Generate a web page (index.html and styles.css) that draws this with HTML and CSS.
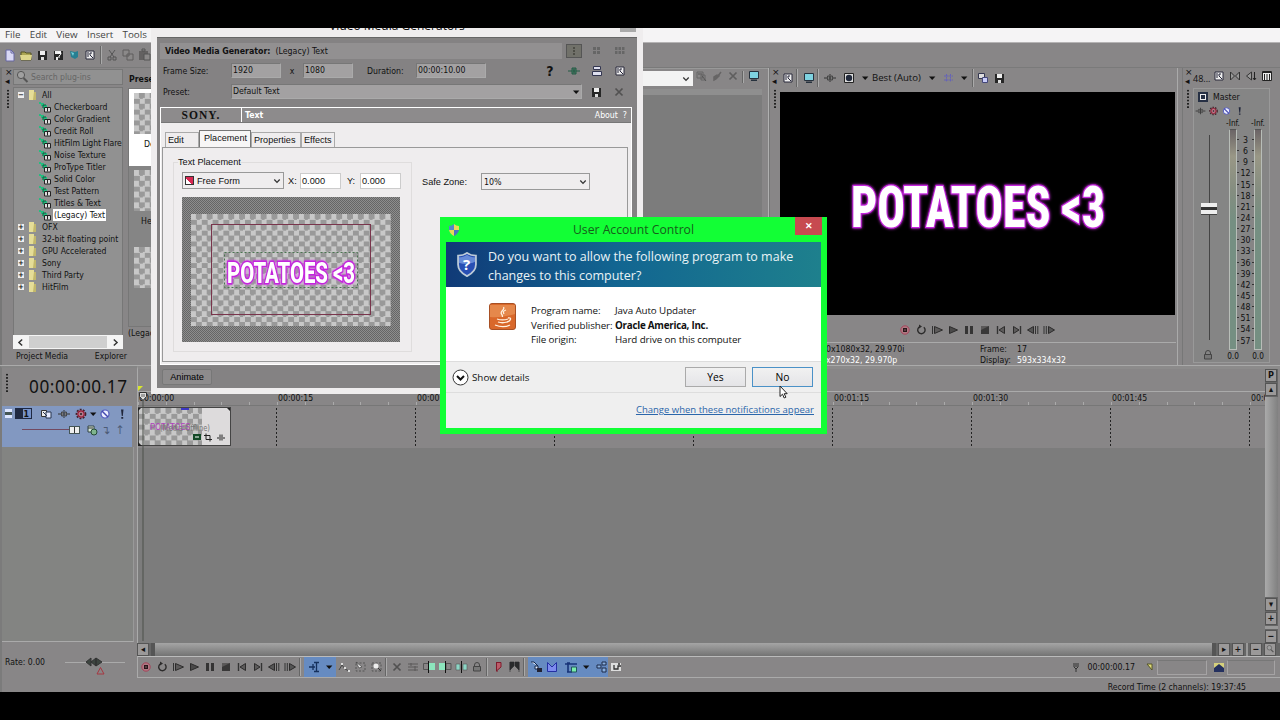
FILE: index.html
```html
<!DOCTYPE html>
<html lang="en">
<head>
    <meta charset="UTF-8">
    <title>Video Editor</title>
    <link rel="stylesheet" href="styles.css">
</head>
<body>
    <svg class="sprite">
        <symbol id="new" viewBox="0 0 16 16"><path d="M4 3h5l3 3v8H4z" fill="#d9d8f5" stroke="#6767a0"/><path d="M9 3v3h3" fill="none" stroke="#6767a0"/></symbol>
        <symbol id="open" viewBox="0 0 16 16"><path d="M3 5h4l1 1h5v7H3z" fill="#aba553" stroke="#555225"/><path d="M2 8h12l-1 5H3z" fill="#ddd68c"/></symbol>
        <symbol id="save" viewBox="0 0 16 16"><path d="M4 4h9v9H4z" fill="#262626"/><path d="M6 4h5v4H6z" fill="#eee"/><path d="M7 10h3v3H7z" fill="#ddd"/></symbol>
        <symbol id="saveas" viewBox="0 0 16 16"><path d="M4 4h9v9H4z" fill="#262626"/><path d="M5 4h6v3H5zM6 10h2v3H6z" fill="#eee"/><path d="M8 6q3-2 3 0t-2 3v2" fill="none" stroke="#fff"/></symbol>
        <symbol id="render" viewBox="0 0 16 16"><path d="M4 4l5 1v7l-4-2zM9 5l3-1v6l-3 2z" fill="#277f92"/><path d="M5 5l3 1-1 3z" fill="#79d2da"/></symbol>
        <symbol id="props" viewBox="0 0 16 16"><path d="M4 4h8v8H4z" fill="#eee" stroke="#29293a"/><path d="M6 5v5M7 7h2M8 8l3 3M9 5v2" stroke="#242438" fill="none"/></symbol>
        <symbol id="cut" viewBox="0 0 16 16"><path d="M5 3l5 7M11 3l-5 7M4 10h3v3H4zM9 10h3v3H9z" fill="none" stroke="#555"/></symbol>
        <symbol id="copy" viewBox="0 0 16 16"><path d="M3 3h6v6H3zM7 7h6v6H7z" fill="#8b8989" stroke="#5e5d5d"/></symbol>
        <symbol id="paste" viewBox="0 0 16 16"><path d="M3 4h9v9H3z" fill="#636161"/><path d="M6 2h3v2H6zM8 7h6v6H8z" fill="#8b8989" stroke="#555"/></symbol>
        <symbol id="glass" viewBox="0 0 16 16"><circle cx="7" cy="6" r="3.6" fill="#a0a0a0" stroke="#555"/><path d="M9.5 9l4 4" stroke="#555" stroke-width="2"/></symbol>
        <symbol id="fx" viewBox="0 0 15 13"><path d="M1 1h2v2H1zM3 2h3v3H3zM5 4h4v4H5z" fill="#25bd80"/><path d="M5 7V4h3" stroke="#085b3c" fill="none"/><path d="M6.500 6.500h6v4.500h-6zM9.500 6.500v4" fill="#ddd" stroke="#222"/></symbol>
        <symbol id="folder" viewBox="0 0 12 12"><path d="M2 1h5v10H2z" fill="#e5dd97"/><path d="M7 3h2v8H6z" fill="#c1b76b"/></symbol>
        <symbol id="rec" viewBox="0 0 16 16"><circle cx="8" cy="8" r="4.2" fill="#b07a84" stroke="#a4445a"/><rect x="6" y="6" width="4" height="4" fill="#28171a"/><rect x="7.500" y="7.500" width="1" height="1" fill="#eab"/></symbol>
        <symbol id="loop" viewBox="0 0 16 16"><path d="M10.8 5.200A3.700 3.700 0 1 1 7 4.600" fill="none" stroke="#2c2b2b" stroke-width="1.400"/><path d="M6 2.500l3 2-3 2z" fill="#2c2b2b"/></symbol>
        <symbol id="playstart" viewBox="0 0 16 16"><path d="M3.500 4v8" stroke="#333"/><path d="M5.500 4.500l8 3.500-8 3.500z" fill="#5d5b5b" stroke="#2c2b2b"/></symbol>
        <symbol id="play" viewBox="0 0 16 16"><path d="M4.500 4.500l8 3.500-8 3.500z" fill="#4a4949" stroke="#2c2b2b"/></symbol>
        <symbol id="pause" viewBox="0 0 16 16"><path d="M4 4h3v8H4zM9 4h3v8H9z" fill="#353434"/></symbol>
        <symbol id="stop" viewBox="0 0 16 16"><path d="M4 4h8v8H4z" fill="#393838"/><path d="M4 4h8l-8 4z" fill="#5b5959"/></symbol>
        <symbol id="first" viewBox="0 0 16 16"><path d="M4.500 4v8" stroke="#333" stroke-width="1.400"/><path d="M11.500 4.500v7L6 8z" fill="#5d5b5b" stroke="#2c2b2b"/></symbol>
        <symbol id="last" viewBox="0 0 16 16"><path d="M11.500 4v8" stroke="#333" stroke-width="1.400"/><path d="M4.500 4.500v7L10 8z" fill="#5d5b5b" stroke="#2c2b2b"/></symbol>
        <symbol id="prev" viewBox="0 0 16 16"><path d="M8.500 4.500v7L2.500 8z" fill="#555" stroke="#2c2b2b"/><path d="M10.500 4v8M12.800 4v8" stroke="#333"/></symbol>
        <symbol id="next" viewBox="0 0 16 16"><path d="M7.500 4.500v7l6-3.500z" fill="#555" stroke="#2c2b2b"/><path d="M3 4v8M5.300 4v8" stroke="#333"/></symbol>
        <symbol id="caret" viewBox="0 0 8 8"><path d="M1 2.500h6.400l-3.200 3.500z" fill="#111"/></symbol>
        <symbol id="chev" viewBox="0 0 8 8"><path d="M1.300 2.500L4 5.400l2.700-2.900" fill="none" stroke="#333" stroke-width="1.300"/></symbol>
        <symbol id="x" viewBox="0 0 16 16"><path d="M4.500 4.500l7 7M11.500 4.500l-7 7" stroke="#525151" stroke-width="1.700"/></symbol>
        <symbol id="brush" viewBox="0 0 16 16"><path d="M12 4L9 8M5 12l2-1 3-3-2-1-3 2z" fill="#5b5a5a" stroke="#5b5a5a" stroke-width="1.500"/></symbol>
        <symbol id="search2" viewBox="0 0 16 16"><path d="M4 4h6v6H4zM8 7h4v5H8z" fill="none" stroke="#5b5a5a"/><path d="M9 8l4 5M5 6h4" stroke="#444"/></symbol>
        <symbol id="screen" viewBox="0 0 16 16"><path d="M3.500 3.500h9v7h-9z" fill="#7ed2e0" stroke="#26313d"/><path d="M5 13h6v-1.500H5z" fill="#26313d"/></symbol>
        <symbol id="plug" viewBox="0 0 16 16"><path d="M2 8h3M11 8h3M8 4v8" stroke="#333"/><path d="M5.500 6h1.500v4H5.500zM9 6h1.500v4H9z" fill="#aaa" stroke="#333" stroke-width=".8"/></symbol>
        <symbol id="plugg" viewBox="0 0 16 16"><path d="M2 8h12M8 4v8" stroke="#225b44"/><path d="M6 5h1v6H6zM9 5h1v6H9z" fill="#62a386" stroke="#225b44"/></symbol>
        <symbol id="rack" viewBox="0 0 16 16"><path d="M4.500 3.500h7v3h-7zM3.500 8.500h9v4h-9z" fill="#dfe0ef" stroke="#333650"/></symbol>
        <symbol id="dot" viewBox="0 0 16 16"><path d="M3.500 3.500h9v9h-9z" fill="#ddd" stroke="#222"/><circle cx="8" cy="8" r="3.200" fill="#222a3c"/></symbol>
        <symbol id="grid" viewBox="0 0 16 16"><path d="M4 6h9M4 10h9M6.500 4v8M10.500 4v8" stroke="#6563b8" stroke-dasharray="2 .6"/></symbol>
        <symbol id="clip" viewBox="0 0 16 16"><path d="M3.500 3.500h6v5h-6z" fill="#ddd" stroke="#333650"/><path d="M7.500 7.500h5v5h-5z" fill="#c9cdfa" stroke="#45487a"/></symbol>
        <symbol id="gear" viewBox="0 0 16 16"><circle cx="8" cy="8" r="4.600" fill="none" stroke="#431f28" stroke-width="1.500" stroke-dasharray="2 1.300"/><circle cx="8" cy="8" r="3.200" fill="#b6798a" stroke="#98172f" stroke-width="1.200"/><circle cx="8" cy="8" r="1" fill="#222"/></symbol>
        <symbol id="mute" viewBox="0 0 16 16"><circle cx="8" cy="8" r="4" fill="#eceeff" stroke="#5359bd" stroke-width="1.200"/><path d="M5 5l6 6" stroke="#4449af" stroke-width="1.500"/></symbol>
        <symbol id="bang" viewBox="0 0 16 16"><path d="M7 3.500h2.500L8.800 10h-1zM7.300 11h1.900v1.700H7.300z" fill="#20263b"/></symbol>
        <symbol id="monitor" viewBox="0 0 16 16"><path d="M3.500 4.500h5v6h-5z" fill="#eee" stroke="#333"/><path d="M8 6h5v6H8zM5 6l4 4" fill="#e6ebff" stroke="#26344f"/></symbol>
        <symbol id="bowtie" viewBox="0 0 16 16"><path d="M3.500 4v8l4-4zM12.500 4v8l-4-4z" fill="#999" stroke="#333"/></symbol>
        <symbol id="dim" viewBox="0 0 16 16"><path d="M8.500 4v8L3.500 8z" fill="#999" stroke="#333"/><path d="M11.500 4v8M10 10l1.500 2 1.500-2" stroke="#222" fill="none"/></symbol>
        <symbol id="meters" viewBox="0 0 16 16"><path d="M3.500 3.500h9v9h-9z" fill="#eee" stroke="#222"/><path d="M3 4.500h10M5.500 6v6M8 6v6M10.500 6v6" stroke="#222"/></symbol>
        <symbol id="lock" viewBox="0 0 16 16"><path d="M5.500 8V6a2.500 2.500 0 0 1 5 0v2" fill="none" stroke="#444"/><path d="M4.500 7.500h7V12h-7z" fill="#777" stroke="#444"/></symbol>
        <symbol id="edit" viewBox="0 0 16 16"><path d="M9.500 3v10M7 3.500h5M7 12.500h5M2 8h6M6 5v6" stroke="#15305c" fill="none" stroke-width="1.300"/></symbol>
        <symbol id="env" viewBox="0 0 16 16"><path d="M3 11l3-5 3 4 4 2" stroke="#444" fill="none"/><path d="M5 4h2v2H5zM8 8h2v2H8zM12 11h2v2h-2z" fill="#ddd"/></symbol>
        <symbol id="sel" viewBox="0 0 16 16"><path d="M4 4h9v8H4z" fill="none" stroke="#555" stroke-dasharray="2 1.500"/><path d="M4 3l6 5-3 1z" fill="#eee" stroke="#444" stroke-width=".7"/></symbol>
        <symbol id="zoom" viewBox="0 0 16 16"><path d="M4 4h9v8H4z" fill="none" stroke="#555" stroke-dasharray="2 1.500"/><circle cx="8" cy="7" r="2.500" fill="#eee"/><path d="M10 9l3 3" stroke="#333"/></symbol>
        <symbol id="trim1" viewBox="0 0 16 16"><path d="M2.500 4.500h5v6h-5z" fill="none" stroke="#555"/><path d="M8 4h6v7H8z" fill="#8ce5bd"/><path d="M7.500 2v12" stroke="#111"/></symbol>
        <symbol id="trim2" viewBox="0 0 16 16"><path d="M9 4.500h5v6H9z" fill="none" stroke="#555"/><path d="M2 4h6v7H2z" fill="#8ce5bd"/><path d="M8.500 2v12" stroke="#111"/></symbol>
        <symbol id="split" viewBox="0 0 16 16"><path d="M3 5h4v6H3zM10 5h4v6h-4z" fill="#8cd5c5" stroke="#555" stroke-width=".6"/><path d="M8.500 2v12" stroke="#111"/></symbol>
        <symbol id="ripple" viewBox="0 0 16 16"><path d="M3 5h10M3 8h10M3 11h10M6 4v3M10 7v5" stroke="#5a5959"/></symbol>
        <symbol id="marker" viewBox="0 0 16 16"><path d="M6 3.500h5V8l-4 3.500V13M6.500 3v9" fill="#bb5c69" stroke="#7e1b2c"/></symbol>
        <symbol id="region" viewBox="0 0 16 16"><path d="M4 3h4v4l-4 4zM13 3H9v4l4 4zM4 3v10M13 3v10" fill="#292a2b" stroke="#292a2b" stroke-width=".6"/></symbol>
        <symbol id="snap" viewBox="0 0 16 16"><path d="M3 3h3l4 4M7 7h3v3H7z" stroke="#122546" fill="#e7efff"/><path d="M9 9h5v4H9z" fill="#223"/></symbol>
        <symbol id="fade" viewBox="0 0 16 16"><path d="M3.500 3.500L8 8l4.500-4.500v9h-9z" fill="#7d8bef" stroke="#2430a2"/></symbol>
        <symbol id="auto" viewBox="0 0 16 16"><path d="M2 5h12M5 5v8M4 4h3M4 13h5" stroke="#173378" stroke-width="1.600"/><path d="M8.500 8h5v5h-5z" fill="#79edaa" stroke="#20575c"/></symbol>
        <symbol id="group" viewBox="0 0 16 16"><path d="M3 6h4v3H3zM8 3h4v3H8zM8 9h4v4H8z" fill="#8ab0e0" stroke="#1c2b48"/></symbol>
        <symbol id="unlock" viewBox="0 0 16 16"><path d="M3 4h10v8H3z" fill="#ddd"/><path d="M6 6v4h4V7h3M10 5h2" fill="none" stroke="#333" stroke-width="1.300"/></symbol>
        <symbol id="auto2" viewBox="0 0 16 16"><path d="M4 4h6v6H4z" fill="#d7e8d7" stroke="#344"/><circle cx="10" cy="10" r="3" fill="#7fb58d" stroke="#254b35"/><path d="M4 6h5" stroke="#333"/></symbol>
        <symbol id="shield" viewBox="0 0 24 28"><path d="M12 1c4 3 7 3 10 3v10c0 6-4 10-10 13C6 24 2 20 2 14V4c3 0 6 0 10-3z" fill="#284fb4" stroke="#bdcbd8" stroke-width="2"/><path d="M12 3c3 2 6 3 9 3v5c-6 3-12 3-18 1V6c3 0 6-1 9-3z" fill="#668bd8"/></symbol>
        <symbol id="java" viewBox="0 0 27 27"><rect x=".5" y=".5" width="26" height="26" rx="2.500" fill="#d9682a" stroke="#a85024"/><path d="M1 2h25v9Q13 15 1 14z" fill="#e5884b"/><path d="M14.500 4c2 3-4 4-2 7 1 1 1 2 1 3M17 7c-3 1-3 2-2 4M8 16c3 1 8 1 11 0M9 19c3 1 6 1 9 0M6 22c5 2 11 2 15 0M19 15c4-1 3 3-1 4" fill="none" stroke="#fff1df" stroke-width="1.300"/></symbol>
    </svg>

    <div class="app">
        <nav class="menubar"><span>File</span><span>Edit</span><span>View</span><span>Insert</span><span>Tools</span></nav>

        <div class="toolbar">
            <svg class="ic"><use href="#new"/></svg><svg class="ic"><use href="#open"/></svg><svg class="ic"><use href="#save"/></svg><svg class="ic"><use href="#saveas"/></svg><svg class="ic"><use href="#render"/></svg><svg class="ic"><use href="#props"/></svg>
            <i class="sep"></i>
            <svg class="ic"><use href="#cut"/></svg><svg class="ic"><use href="#copy"/></svg><svg class="ic"><use href="#paste"/></svg>
        </div>

        <div class="docks">
            <section class="plugins">
                <div class="grip"></div>
                <div class="plugin-tree">
                    <div class="search"><svg class="ic"><use href="#glass"/></svg>Search plug-ins</div>
                    <ul class="tree">
                        <li><b class="box">&minus;</b><svg class="fold"><use href="#folder"/></svg>All</li>
                        <li class="sub"><svg class="fx"><use href="#fx"/></svg><span>Checkerboard</span></li>
                        <li class="sub"><svg class="fx"><use href="#fx"/></svg><span>Color Gradient</span></li>
                        <li class="sub"><svg class="fx"><use href="#fx"/></svg><span>Credit Roll</span></li>
                        <li class="sub"><svg class="fx"><use href="#fx"/></svg><span class="tight">HitFilm Light Flare</span></li>
                        <li class="sub"><svg class="fx"><use href="#fx"/></svg><span>Noise Texture</span></li>
                        <li class="sub"><svg class="fx"><use href="#fx"/></svg><span>ProType Titler</span></li>
                        <li class="sub"><svg class="fx"><use href="#fx"/></svg><span>Solid Color</span></li>
                        <li class="sub"><svg class="fx"><use href="#fx"/></svg><span>Test Pattern</span></li>
                        <li class="sub"><svg class="fx"><use href="#fx"/></svg><span>Titles &amp; Text</span></li>
                        <li class="sub"><svg class="fx"><use href="#fx"/></svg><span class="picked">(Legacy) Text</span></li>
                        <li><b class="box">+</b><svg class="fold"><use href="#folder"/></svg>OFX</li>
                        <li><b class="box">+</b><svg class="fold"><use href="#folder"/></svg>32-bit floating point</li>
                        <li><b class="box">+</b><svg class="fold"><use href="#folder"/></svg>GPU Accelerated</li>
                        <li><b class="box">+</b><svg class="fold"><use href="#folder"/></svg>Sony</li>
                        <li><b class="box">+</b><svg class="fold"><use href="#folder"/></svg>Third Party</li>
                        <li><b class="box">+</b><svg class="fold"><use href="#folder"/></svg>HitFilm</li>
                    </ul>
                    <div class="tree-scroll"><svg class="arrow left"><use href="#chev"/></svg><i></i><svg class="arrow right"><use href="#chev"/></svg></div>
                    <div class="dock-tabs"><span>Project Media</span><span>Explorer</span></div>
                </div>
                <div class="presets">
                    <b>Preset:</b>
                    <div class="preset-list">
                        <div class="preset on"><i class="checker"></i><span>Default</span></div>
                        <div class="preset"><i class="checker"></i><span>Heading</span></div>
                        <div class="preset"><i class="checker"></i></div>
                    </div>
                    <span class="preset-name">(Legacy) Text</span>
                </div>
            </section>

            <section class="trimmer">
                <div class="trim-bar"><div class="combo"><svg class="car"><use href="#chev"/></svg></div><svg class="ic"><use href="#search2"/></svg><svg class="ic"><use href="#brush"/></svg><svg class="ic"><use href="#x"/></svg><i class="sep"></i><svg class="ic scr"><use href="#screen"/></svg></div>
                <div class="trim-body"></div>
            </section>

            <section class="preview">
                <div class="grip"></div>
                <div class="preview-main">
                    <div class="preview-bar">
                        <svg class="ic"><use href="#props"/></svg><i class="sep"></i><svg class="ic m3"><use href="#screen"/></svg><i class="sep"></i><svg class="ic m3"><use href="#plug"/></svg><svg class="ic m3"><use href="#dot"/></svg><svg class="car m4"><use href="#caret"/></svg><span class="quality">Best (Auto)</span><svg class="car m7"><use href="#caret"/></svg><svg class="ic m4"><use href="#grid"/></svg><svg class="car m4"><use href="#caret"/></svg><i class="sep m4"></i><svg class="ic m1"><use href="#clip"/></svg><svg class="ic"><use href="#save"/></svg>
                    </div>
                    <div class="video">
                        <svg width="395" height="223"><text x="71" y="134.500" class="potato big" textLength="254" lengthAdjust="spacingAndGlyphs">POTATOES &lt;3</text></svg>
                    </div>
                    <div class="transport">
                        <svg class="ic"><use href="#rec"/></svg><svg class="ic"><use href="#loop"/></svg><svg class="ic"><use href="#playstart"/></svg><svg class="ic"><use href="#play"/></svg><svg class="ic"><use href="#pause"/></svg><svg class="ic"><use href="#stop"/></svg><svg class="ic"><use href="#first"/></svg><svg class="ic"><use href="#last"/></svg><svg class="ic"><use href="#prev"/></svg><svg class="ic"><use href="#next"/></svg>
                    </div>
                    <div class="info">
                        <div class="info-src"><span>1920x1080x32, 29.970i</span><span class="lit">480x270x32, 29.970p</span></div>
                        <div class="info-key"><span>Frame:</span><span>Display:</span></div>
                        <div><span>17</span><span class="lit">593x334x32</span></div>
                    </div>
                </div>
            </section>

            <section class="mixer">
                <div class="grip"></div>
                <div class="mixer-main">
                    <div class="mixer-bar"><span>48...</span><svg class="ic"><use href="#props"/></svg><svg class="ic"><use href="#bowtie"/></svg><svg class="ic"><use href="#dim"/></svg><svg class="ic"><use href="#meters"/></svg></div>
                    <div class="master">
                        <div class="master-name"><i></i>Master</div>
                        <div class="master-icons"><svg class="ic"><use href="#plug"/></svg><svg class="ic"><use href="#gear"/></svg><svg class="ic"><use href="#mute"/></svg><svg class="ic"><use href="#bang"/></svg></div>
                        <div class="levels">
                            <div class="fader"><i></i><svg class="ic"><use href="#lock"/></svg></div>
                            <div class="meter"><span>-Inf.</span><i></i><span>0.0</span></div>
                            <div class="scale"><span>3</span><span>6</span><span>9</span><span>12</span><span>15</span><span>18</span><span>21</span><span>24</span><span>27</span><span>30</span><span>33</span><span>36</span><span>39</span><span>42</span><span>45</span><span>48</span><span>51</span><span>54</span><span>57</span></div>
                            <div class="meter"><span>-Inf.</span><i></i><span>0.0</span></div>
                        </div>
                    </div>
                </div>
            </section>
        </div>

        <div class="timeline">
            <aside class="tracks">
                <div class="clock"><i class="grip"></i>00:00:00.17</div>
                <div class="track">
                    <div class="track-row"><span class="fold-btns"></span><b class="num">1</b><svg class="ic"><use href="#monitor"/></svg><svg class="ic"><use href="#plug"/></svg><svg class="ic"><use href="#gear"/></svg><svg class="car"><use href="#caret"/></svg><svg class="ic"><use href="#mute"/></svg><svg class="ic"><use href="#bang"/></svg></div>
                    <div class="track-row level"><i></i><b></b><svg class="ic"><use href="#auto2"/></svg><span>&#8628;</span><span>&#8593;</span></div>
                </div>
                <div class="tracks-rest"></div>
                <div class="rate">Rate: 0.00
                    <svg width="66" height="24"><path d="M0 8.500h60" stroke="#aaa"/><path d="M21 8l5-4v8zM26 8l5-4v8zM31 4l6 4-6 4z" fill="#3d4540" stroke="#333"/><path d="M32 20l3.500-6.500L39 20z" fill="none" stroke="#a63641"/></svg>
                </div>
            </aside>
            <div class="arrange">
                <div class="arrange-top">
                    <div class="arrange-main">
                        <div class="markers"></div>
                        <div class="ruler"><span>00:00:00</span><span>00:00:15</span><span>00:00:30</span><span>00:00:45</span><span>00:01:00</span><span>00:01:15</span><span>00:01:30</span><span>00:01:45</span><span>00:02:00</span></div>
                        <div class="lane">
                            <div class="event"><i class="checker"></i>
                                <svg width="92" height="38"><text x="12" y="21.500" class="tiny" textLength="40" lengthAdjust="spacingAndGlyphs">POTATOES</text><text x="22" y="22.500" class="offline" textLength="50" lengthAdjust="spacingAndGlyphs">(Media Offline)</text><path d="M55 26h8v6h-8z" fill="#154a28"/><path d="M57 29h4" stroke="#fff"/><path d="M68 25.500v6h6M66 27.500h6v6M79 30h2M85 30h2M82 26.500v6M84 26.500v6" fill="none" stroke="#222"/><path d="M0 3V0h3zM92 3V0h-3zM0 38v-4l4 4z" fill="#222"/><path d="M43 0h8v2h-8z" fill="#3c37c5"/></svg>
                            </div>
                        </div>
                        <svg class="playhead" width="10" height="255"><path d="M1 0h5L1 5z" fill="#d8e62c"/><path d="M6 14v241" stroke="#4c504a"/><path d="M2.500 6.500h7v4l-3.500 4-3.500-4z" fill="#ddd" stroke="#333"/><path d="M5 8v3M7 8v3" stroke="#444" stroke-width=".8"/></svg>
                    </div>
                    <div class="vscroll"><b>P</b><b>&#9652;</b><i></i><b>&#9662;</b><b>+</b><em></em><b>&minus;</b></div>
                </div>
                <div class="hscroll"><b>&#9666;</b><i></i><b>&#9656;</b><b>+</b><em></em><b>&minus;</b><b class="mag"><svg><use href="#glass"/></svg></b></div>
                <div class="editbar">
                    <svg class="ic"><use href="#rec"/></svg><svg class="ic"><use href="#loop"/></svg><svg class="ic"><use href="#playstart"/></svg><svg class="ic"><use href="#play"/></svg><svg class="ic"><use href="#pause"/></svg><svg class="ic"><use href="#stop"/></svg><svg class="ic"><use href="#first"/></svg><svg class="ic"><use href="#last"/></svg><svg class="ic"><use href="#prev"/></svg><svg class="ic"><use href="#next"/></svg>
                    <i class="sep"></i>
                    <span class="on tool"><svg class="ic"><use href="#edit"/></svg><svg class="car"><use href="#caret"/></svg></span>
                    <svg class="ic"><use href="#env"/></svg><svg class="ic"><use href="#sel"/></svg><svg class="ic"><use href="#zoom"/></svg>
                    <i class="sep s2"></i>
                    <svg class="ic"><use href="#x"/></svg><svg class="ic"><use href="#ripple"/></svg><svg class="ic"><use href="#trim1"/></svg><svg class="ic"><use href="#trim2"/></svg><svg class="ic"><use href="#split"/></svg><svg class="ic"><use href="#lock"/></svg>
                    <i class="sep s2"></i>
                    <svg class="ic"><use href="#marker"/></svg><svg class="ic"><use href="#region"/></svg>
                    <i class="sep s2"></i>
                    <span class="on snaps"><svg class="ic"><use href="#snap"/></svg><svg class="ic"><use href="#fade"/></svg><svg class="ic wide"><use href="#auto"/></svg><svg class="car"><use href="#caret"/></svg><svg class="ic"><use href="#group"/></svg></span>
                    <svg class="ic"><use href="#unlock"/></svg>
                    <div class="cursor-pos">
                        <svg width="12" height="16"><path d="M4 4v4l2 2v3M8 4v4L6 10M6 4v4" fill="none" stroke="#333"/></svg><span>00:00:00.17</span>
                        <svg width="10" height="12"><path d="M3 3h5v6z" fill="#e0dc7a" stroke="#555528"/></svg><i></i>
                        <svg width="14" height="14"><path d="M2 3h10v8H2z" fill="#d5d07c"/><path d="M2 8l5-4 5 4v4H2z" fill="#24305f"/></svg><i class="last"></i>
                    </div>
                </div>
                <div class="status"><span>Record Time (2 channels): 19:37:45</span></div>
            </div>
        </div>
    </div>

    <div class="generator">
        <div class="gen-title">Video Media Generators<i></i></div>
        <div class="gen-body">
            <div class="gen-row head"><div class="gen-name"><b>Video Media Generator:</b>  (Legacy) Text</div><span class="view on"><svg width="8" height="8"><path d="M3 0h2v2H3zM3 3h2v2H3zM3 6h2v2H3z" fill="#4d4d46"/></svg></span><span class="view"><svg width="8" height="8"><path d="M0 0h3v3H0zM4 0h3v3H4zM0 4h3v3H0zM4 4h3v3H4z" fill="#666"/></svg></span><span class="view"><svg width="10" height="8"><path d="M0 0h2.500v3H0zM3.500 0H6v3H3.500zM7 0h2.500v3H7zM0 4h2.500v3H0zM3.500 4H6v3H3.500zM7 4h2.500v3H7z" fill="#666"/></svg></span></div>
            <div class="gen-row"><label>Frame Size:</label><span class="field">1920</span><span class="by">x</span><span class="field">1080</span><span class="dur">Duration:</span><span class="field long">00:00:10.00</span><b class="help">?</b><svg class="ic"><use href="#plugg"/></svg><svg class="ic"><use href="#rack"/></svg><svg class="ic"><use href="#props"/></svg></div>
            <div class="gen-row"><label>Preset:</label><span class="field preset-pick">Default Text<svg class="car"><use href="#caret"/></svg></span><svg class="ic push"><use href="#save"/></svg><svg class="ic"><use href="#x"/></svg></div>
            <div class="effect">
                <div class="brand"><b class="sony">SONY.</b><b class="kind">Text</b><span>About &nbsp;?</span></div>
                <div class="tabs"><span>Edit</span><span class="current">Placement</span><span class="wider">Properties</span><span>Effects</span></div>
                <div class="tab-page">
                    <fieldset>
                        <legend>Text Placement</legend>
                        <div class="place-row"><span class="pick"><i></i>Free Form<svg class="car"><use href="#chev"/></svg></span><label>X:</label><span class="num-in">0.000</span><label>Y:</label><span class="num-in">0.000</span></div>
                        <div class="canvas">
                            <div class="frame">
                                <div class="safe"><svg width="158" height="90"><rect x="12.500" y="27.500" width="133" height="35" fill="none" stroke="#4b7550" stroke-dasharray="2 2"/><text x="15" y="57.500" class="potato small" textLength="128" lengthAdjust="spacingAndGlyphs">POTATOES &lt;3</text></svg></div>
                            </div>
                        </div>
                    </fieldset>
                    <div class="zone">Safe Zone:<span class="pick">10%<svg class="car"><use href="#chev"/></svg></span></div>
                </div>
            </div>
            <div class="gen-foot"><button>Animate</button></div>
        </div>
    </div>

    <div class="uac">
        <div class="uac-title"><svg width="12" height="12"><path d="M6 0v6H1V2q3 0 5-2z" fill="#5687c8"/><path d="M6 0v6h5V2Q8 2 6 0z" fill="#ebdc54"/><path d="M1 6h5v6Q2 10 1 6z" fill="#e5da58"/><path d="M6 6h5q-1 4-5 6z" fill="#4f74bd"/></svg><span>User Account Control</span><b>&#10005;</b></div>
        <div class="uac-body">
            <div class="question"><span class="badge"><svg><use href="#shield"/></svg><b>?</b></span><p>Do you want to allow the following program to make<br>changes to this computer?</p></div>
            <div class="program"><svg width="27" height="27"><use href="#java"/></svg><dl><dt>Program name:</dt><dd>Java Auto Updater</dd><dt>Verified publisher:</dt><dd><b>Oracle America, Inc.</b></dd><dt>File origin:</dt><dd>Hard drive on this computer</dd></dl></div>
            <div class="choices"><svg width="17" height="17"><circle cx="8.500" cy="8.500" r="7.500" fill="#fff" stroke="#333"/><path d="M5 7l3.500 3.500L12 7" fill="none" stroke="#111" stroke-width="2"/></svg><span>Show details</span><button>Yes</button><button class="focus">No</button></div>
            <div class="change"><a href="#">Change when these notifications appear</a></div>
        </div>
    </div>
    <svg class="pointer" width="10" height="15"><path d="M1 1v10.500l2.500-2.300L5.200 13l1.700-.8-1.700-3.500h3z" fill="#fff" stroke="#222"/></svg>
</body>
</html>
```
FILE: styles.css
```css
* {
    box-sizing: border-box;
}
body {
    margin: 0;
    width: 1280px;
    height: 720px;
    overflow: hidden;
    background: #000;
    color: #111;
    font: 8.7px/12px "DejaVu Sans Condensed", "DejaVu Sans", sans-serif;
    font-stretch: condensed;
}
svg {
    display: block;
    flex: none;
}
i, em {
    font-style: normal;
    display: block;
}
.sprite {
    display: none;
}
.ic {
    width: 16px;
    height: 16px;
}
.car {
    width: 8px;
    height: 8px;
}
.sep {
    width: 2px;
    height: 18px;
    border-left: 1px solid #666;
    border-right: 1px solid #aaa;
    flex: none;
}
.checker {
    background: repeating-conic-gradient(#999 0 25%, #c8c8c8 0 50%) 0 0 / 10.8px 10.8px;
}
.grip {
    width: 4px;
    height: 40px;
    background: radial-gradient(#222 1px, transparent 1.3px) 0 0 / 4px 3.3px;
}

/* main window */
.app {
    margin-top: 28px;
    height: 664px;
    background: #888687;
    display: flex;
    flex-direction: column;
    overflow: hidden;
}
.menubar {
    height: 15px;
    background: #f5f4f5;
    border-bottom: 1px solid #b5b3b4;
    display: flex;
    gap: 9.2px;
    padding-left: 5px;
    font: 9.8px/13px "Open Sans", sans-serif;
    color: #444;
}
.toolbar {
    height: 24px;
    display: flex;
    align-items: center;
    padding-left: 2px;
}
.toolbar .sep {
    margin: 0 2px 0 2px;
}
.docks {
    height: 299px;
    display: flex;
    border-bottom: 1px solid #aaa;
    border-top: 1px solid #7a7a7a;
}
.docks > section {
    flex: none;
}
.plugins {
    width: 642px;
    display: flex;
    border-left: 2px solid #777;
}
.plugins > .grip, .preview > .grip, .mixer > .grip {
    margin: 21px 3px 0 4px;
    height: 20px;
    position: relative;
}
.grip::before {
    content: "\00d7  \25c2";
    white-space: pre-line;
    position: absolute;
    top: -21px;
    left: -1px;
    font: 9px/9px "DejaVu Sans", sans-serif;
    width: 8px;
}
.clock .grip::before {
    content: none;
}
.plugin-tree {
    width: 110px;
}
.search {
    margin-top: 1px;
    height: 16px;
    border: 1px solid #777;
    background: #919191;
    color: #666;
    display: flex;
    align-items: center;
    gap: 1px;
    font-size: 8.6px;
}
.tree {
    list-style: none;
    margin: 2px 0 0;
    padding: 1px 0 0 4px;
    height: 248px;
    border: 1px solid #777;
    border-bottom: 0;
    background: #919191;
    font-size: 8.55px;
}
.tree li {
    height: 12.03px;
    display: flex;
    align-items: center;
    white-space: nowrap;
}
.tree .sub {
    padding-left: 20px;
}
.tree .sub span {
    padding: 0 1px;
}
.tree .sub .tight {
    letter-spacing: -.1px;
}
.tree .sub .picked {
    background: #fff;
}
.box {
    width: 6px;
    height: 6px;
    background: #eee;
    font: bold 7px/6px "DejaVu Sans", sans-serif;
    text-align: center;
}
.fold {
    width: 12px;
    height: 12px;
    margin: 0 3px 0 3px;
}
.fx {
    width: 15px;
    height: 13px;
}
.tree-scroll {
    height: 14px;
    background: #f4f4f4;
    display: flex;
    align-items: center;
    justify-content: space-between;
    padding: 0 3px;
}
.tree-scroll i {
    width: 78px;
    height: 12px;
    background: #cfcfcf;
}
.arrow {
    width: 9px;
    height: 9px;
}
.left {
    transform: rotate(90deg);
}
.right {
    transform: rotate(-90deg);
}
.dock-tabs {
    display: flex;
    justify-content: space-between;
    width: 114px;
    padding-left: 3px;
    line-height: 14px;
    white-space: nowrap;
    font-size: 8.6px;
}
.presets {
    margin-left: 5px;
    white-space: nowrap;
}
.presets > b {
    display: block;
    height: 20px;
    line-height: 22px;
    padding-left: 1px;
}
.preset-list {
    width: 420px;
    height: 239px;
    border: 1px solid #777;
    background: #858585;
}
.preset {
    width: 100px;
    height: 77px;
    padding: 4px 5px;
}
.preset.on {
    background: #fff;
}
.preset .checker {
    width: 80px;
    height: 41px;
}
.preset span {
    display: block;
    padding: 4px 0 0 7px;
}
.preset.on span {
    padding-left: 10px;
}
.trimmer {
    width: 127px;
    border-right: 1px solid #b0b0b0;
}
.trim-bar {
    height: 21px;
    padding-top: 2px;
    display: flex;
    border-top: 1px solid #999;
}
.combo {
    width: 51px;
    height: 15px;
    background: #f3f3f3;
    display: flex;
    justify-content: flex-end;
    align-items: center;
    padding-right: 3px;
}
.trim-bar .ic {
    opacity: .75;
    margin-top: -3px;
}
.trim-bar .sep {
    height: 12px;
    margin-left: 1px;
}
.trim-bar .ic.scr {
    opacity: 1;
    margin-left: 2px;
}
.trim-body {
    margin-right: 6px;
    height: 273px;
    background: #7c7c7c;
    border-top: 6px solid #8f8f8f;
}
.preview {
    width: 409px;
    display: flex;
    border-left: 1px solid #777;
    border-right: 1px solid #aaa;
}
.preview > .grip {
    margin-left: 3px;
}
.preview-main {
    width: 396px;
}
.preview-bar {
    height: 24px;
    padding-bottom: 4px;
    display: flex;
    align-items: center;
}
.m1 {
    margin-left: 1px;
}
.m3 {
    margin-left: 3px;
}
.m4 {
    margin-left: 4px;
}
.m7 {
    margin-left: 6px;
}
.quality {
    font: 9.6px/14px "Open Sans", sans-serif;
    width: 50px;
    margin-left: 3px;
    white-space: nowrap;
}
.video {
    width: 395px;
    height: 223px;
    background: #000;
}
.potato {
    font-family: Roboto, sans-serif;
    font-weight: 800;
    fill: #fff;
    stroke: #c325dc;
    paint-order: stroke;
}
.big {
    font-size: 57px;
    stroke-width: 2.5px;
    filter: drop-shadow(0 0 1.5px #d22be8);
}
.small {
    font-size: 29px;
    stroke-width: 3px;
    filter: drop-shadow(0 0 1px #dd3bf0);
}
.tiny {
    font: 9px Roboto, sans-serif;
    fill: #b13fbd;
}
.offline {
    font-size: 9px;
    fill: #777;
}
.transport {
    display: flex;
    padding: 7px 0 0 117px;
    height: 27px;
}
.info {
    border-top: 1px solid #aaa;
    display: flex;
    padding-top: 1px;
}
.info div {
    width: 120px;
}
.info span {
    display: block;
    line-height: 11px;
}
.info .info-src {
    width: 200px;
    padding-left: 31px;
}
.info .info-key {
    width: 37px;
}
.lit {
    color: #fff;
}
.mixer {
    width: 98px;
    display: flex;
    border-left: 1px solid #777;
    margin-left: 4px;
}
.mixer > .grip {
    margin-left: 3px;
    margin-right: 3px;
}
.mixer-main {
    width: 86px;
}
.mixer-bar {
    display: flex;
    height: 20px;
}
.mixer-bar span {
    width: 18px;
    font: 9px/21px "Open Sans", sans-serif;
}
.master {
    width: 77px;
    height: 275px;
    border: 1px solid #999;
    background: #858585;
}
.master-name {
    display: flex;
    align-items: center;
    gap: 5px;
    height: 16px;
    padding-left: 4px;
}
.master-name i {
    width: 10px;
    height: 10px;
    background: #ddd;
    border: 2px solid #263044;
    box-shadow: inset 0 0 0 1px #eee, inset 0 0 0 3px #263044;
}
.master-icons {
    display: flex;
    margin-top: -2px;
    height: 14px;
}
.master-icons .ic {
    width: 13px;
}
.levels {
    display: flex;
    padding-left: 6px;
}
.fader {
    width: 25px;
    height: 240px;
    padding-top: 18px;
    background: linear-gradient(#444, #444) 9px 18px / 1px 205px no-repeat;
}
.fader i {
    width: 16px;
    height: 11px;
    margin: 68px 0 144px 1px;
    border: solid #eee;
    border-width: 4px 0;
    background: #333;
    box-shadow: 0 1px #444;
}
.fader .ic {
    margin-top: -11px;
    width: 16px;
}
.meter {
    width: 16px;
    display: flex;
    flex-direction: column;
    align-items: center;
    font-size: 8.2px;
}
.meter i {
    width: 8px;
    height: 221px;
    border: 1px solid #b8bdb8;
    border-top-color: #555;
    background: linear-gradient(#6b6466, #999786 12%, #848d80 28%, #758f82 42%);
}
.scale {
    width: 9px;
    padding-top: 17px;
}
.scale span {
    display: block;
    height: 11.15px;
    width: 19px;
    margin-left: -5px;
    text-align: center;
    background: linear-gradient(90deg, #333 2px, transparent 0 15px, #333 0) 50% 5px / 17px 1px no-repeat;
}

/* timeline */
.timeline {
    flex: 1;
    display: flex;
    min-height: 0;
}
.tracks {
    width: 137px;
    display: flex;
    flex-direction: column;
    border-top: 2px solid #858585;
    border-left: 2px solid #7b7b7b;
}
.clock {
    height: 38px;
    display: flex;
    font: 17.2px/38px "Noto Sans", sans-serif;
    letter-spacing: .56px;
}
.clock .grip {
    width: 4px;
    height: 20px;
    margin: 5px 20px 0 3px;
}
.track {
    width: 130px;
    height: 41px;
    background: #8298c1;
}
.track-row {
    display: flex;
    align-items: center;
    height: 15px;
    padding-left: 3px;
}
.track-row .ic {
    margin-right: 1.5px;
}
.track-row .car {
    margin: 0 0 0 -2px;
}
.fold-btns {
    width: 7px;
    height: 9px;
    border: solid #dce5ff;
    border-width: 3px 0;
    background: #455;
    flex: none;
}
.num {
    width: 17px;
    height: 11px;
    margin: 0 3px 0 3px;
    background: linear-gradient(90deg, #1f2942 45%, #7692c8 0);
    border: 1px solid #1f2942;
    color: #111;
    text-align: right;
    line-height: 10px;
    padding-right: 2px;
    flex: none;
}
.num + .ic {
    margin-left: 3px;
}
.track-row.level {
    padding-left: 20px;
    height: 17px;
}
.level i {
    width: 47px;
    height: 1px;
    background: #724a61;
}
.level b {
    width: 11px;
    height: 8px;
    border: 1px solid #455;
    background: linear-gradient(90deg, #eee 45%, #333 0 55%, #eee 0);
    margin-right: 4px;
}
.level span {
    width: 14px;
    color: #4d5b76;
    font-size: 12px;
}
.tracks-rest {
    height: 195px;
    width: 132px;
    background: #838482;
    border-right: 1px solid #999;
    border-bottom: 1px solid #aaa;
}
.rate {
    display: flex;
    padding: 12px 0 0 3px;
    gap: 20px;
    white-space: nowrap;
    line-height: 16px;
    font-size: 8.6px;
}
.arrange {
    width: 1143px;
}
.arrange-top {
    display: flex;
    height: 277px;
    border-top: 3px solid #8c8b8b;
    border-left: 1px solid #aaa;
}
.arrange-main {
    width: 1127px;
    background: #7c7c7c;
    position: relative;
}
.markers {
    height: 23px;
    background: #888687;
    border-bottom: 1px solid #aaa;
}
.ruler {
    height: 14px;
    background: repeating-linear-gradient(90deg, #aaa 0 1px, transparent 0 27.8px) 0 100% / 100% 3px no-repeat #888687;
    border-bottom: 1px solid #777;
    display: flex;
    overflow: hidden;
}
.ruler span {
    width: 139px;
    flex: none;
    padding-left: 1px;
    line-height: 13px;
}
.lane {
    height: 42px;
    background: repeating-linear-gradient(#888687 0 2px, transparent 2px 4px), repeating-linear-gradient(90deg, transparent 0 138px, #222 138px 139px), #888687;
    padding-top: 1px;
}
.event {
    width: 93px;
    height: 39px;
    border: 1px solid #444;
    background: #dddbdc;
    display: flex;
}
.event .checker {
    width: 64px;
    height: 37px;
    margin-right: -64px;
}
.playhead {
    position: absolute;
    left: -1px;
    top: 17px;
}
.vscroll {
    width: 13px;
    display: flex;
    flex-direction: column;
    background: #666;
    gap: 1px;
}
.vscroll b, .hscroll b {
    width: 12px;
    height: 13px;
    background: #9b9999;
    border: 1px solid #555;
    font-size: 9px;
    line-height: 10px;
    text-align: center;
    flex: none;
}
.vscroll i {
    flex: 1;
    background: linear-gradient(90deg, #aaa, #808080);
}
.vscroll em {
    height: 3px;
    background: #999;
}
.hscroll {
    display: flex;
    height: 13px;
    background: #666;
    gap: 2px;
}
.hscroll i {
    width: 1065px;
    background: linear-gradient(#a5a5a5, #737373);
    border: solid #555;
    border-width: 0 4px;
}
.hscroll em {
    width: 2px;
    background: #999;
}
.mag svg {
    width: 10px;
    height: 10px;
}
.editbar {
    height: 22px;
    border-top: 1px solid #bbb;
    border-bottom: 1px solid #aaa;
    border-left: 1px solid #aaa;
    display: flex;
    align-items: center;
}
.editbar > .sep {
    margin-left: 1px;
    margin-right: 3px;
}
.editbar > .s2 {
    margin-left: 1px;
    margin-right: 2px;
}
.on.tool, .snaps {
    background: #668bc1;
    display: flex;
    height: 20px;
    align-items: center;
}
.tool {
    width: 32px;
    padding-left: 3px;
}
.tool .car {
    margin-left: 2px;
}
.snaps {
    width: 80px;
    margin-left: 1px;
}
.snaps .wide {
    margin-left: 3px;
}
.snaps .car {
    margin: 0 4px 0 3px;
}
.cursor-pos {
    margin-left: auto;
    display: flex;
    align-items: center;
    padding-right: 5px;
}
.cursor-pos span {
    margin: 0 9px 0 5px;
}
.cursor-pos i {
    width: 50px;
    height: 15px;
    border: 1px solid #a5a3a4;
    border-top-color: #777;
    margin: 0 5px 0 3px;
}
.cursor-pos .last {
    width: 48px;
    margin: 0 0 0 1px;
}
.status {
    text-align: right;
    padding: 3px 34px 0 0;
    font-size: 8.6px;
}

/* generator window */
.generator {
    position: absolute;
    left: 151px;
    top: 28px;
    width: 492px;
    height: 366px;
    background: #efedee;
    padding: 0 6px;
    overflow: hidden;
}
.gen-title {
    font: 12px/16px "Open Sans", sans-serif;
    display: flex;
    justify-content: center;
    position: relative;
    margin-top: -10px;
    height: 19px;
}
.gen-title i {
    position: absolute;
    right: 1px;
    top: 10px;
    width: 16px;
    height: 4px;
    background: #aaa;
}
.gen-body {
    height: 351px;
    background: #848283;
    border-top: 1px solid #666;
    padding: 4px 4px 0 3px;
}
.gen-row {
    height: 21px;
    display: flex;
    align-items: center;
    padding-left: 3px;
}
.gen-row.head {
    padding-left: 0;
    height: 18px;
}
.gen-name {
    width: 402px;
    height: 16px;
    background: #929091;
    line-height: 16px;
    padding-left: 5px;
    font-size: 8.75px;
    white-space: pre;
    flex: none;
}
.view {
    width: 16px;
    height: 14px;
    margin-left: 7px;
    display: flex;
    align-items: center;
    justify-content: center;
    flex: none;
}
.view.on {
    background: #71716a;
    border: 1px solid #555;
    margin-left: 4px;
}
.gen-row label {
    width: 68px;
    flex: none;
}
.field {
    width: 50px;
    height: 15px;
    background: #a3a1a2;
    border: 1px solid #777;
    border-right-color: #aaa;
    border-bottom-color: #aaa;
    padding-left: 1px;
    line-height: 13px;
    flex: none;
}
.by {
    width: 22px;
    text-align: center;
    flex: none;
}
.dur {
    width: 63px;
    padding-left: 14px;
    flex: none;
}
.field.long {
    width: 70px;
}
.help {
    width: 16px;
    margin: 0 8px 0 56px;
    text-align: center;
    font-size: 14px;
    flex: none;
}
.gen-row .ic {
    margin-right: 7px;
}
.gen-row .preset-pick {
    width: 351px;
    display: flex;
    justify-content: space-between;
    align-items: center;
    padding-right: 1px;
}
.gen-row .push {
    margin-left: 6px;
}
.effect {
    width: 472px;
    height: 258px;
    margin-top: 5px;
    background: #efedee;
    border: 1px solid #fff;
}
.brand {
    height: 15px;
    background: #8d8b8c;
    color: #fff;
    display: flex;
    line-height: 15px;
    border-bottom: 1px solid #777;
}
.sony {
    width: 81px;
    border-right: 1px solid #fff;
    font: bold 11.5px/14px "Liberation Serif", serif;
    color: #111;
    text-align: center;
    letter-spacing: 1px;
}
.kind {
    padding-left: 3px;
    flex: 1;
}
.brand span {
    padding-right: 4px;
}
.tabs {
    height: 24px;
    padding: 8px 0 0 4px;
    display: flex;
    align-items: flex-end;
    font: 9.1px/15px "Liberation Sans", sans-serif;
}
.tabs span {
    width: 34px;
    height: 15px;
    border: 1px solid #aaa;
    border-bottom: 0;
    padding: 0 0 0 2px;
    white-space: nowrap;
    flex: none;
}
.tabs .current {
    background: #f7f6f6;
    height: 17px;
    border-color: #777;
    width: 52px;
    padding-left: 4px;
}
.tabs .wider {
    width: 50px;
}
.tab-page {
    width: 466px;
    height: 215px;
    margin-left: 1px;
    border: 1px solid #999;
    display: flex;
    font: 9.2px/12px "Liberation Sans", sans-serif;
}
fieldset {
    width: 239px;
    height: 196px;
    margin: 8px 0 0 10px;
    padding: 0 0 0 8px;
    border: 1px solid #dfdddd;
}
legend {
    padding: 0;
    margin-left: -4px;
}
.place-row {
    display: flex;
    align-items: center;
    margin-top: 4px;
}
.pick {
    width: 102px;
    height: 17px;
    border: 1px solid #999;
    display: flex;
    align-items: center;
    padding: 0 2px;
}
.pick .car {
    margin-left: auto;
}
.pick i {
    width: 9px;
    height: 9px;
    border: 1px solid #333;
    background: linear-gradient(45deg, #fff 40%, #d72751 0);
    margin-right: 3px;
}
.place-row label {
    width: 16px;
    padding-left: 4px;
}
.num-in {
    width: 41px;
    height: 16px;
    border: 1px solid #ccc;
    background: #fff;
    line-height: 14px;
    padding-left: 1px;
}
.num-in + label {
    width: 19px;
    padding-left: 6px;
}
.canvas {
    width: 218px;
    height: 145px;
    margin-top: 8px;
    background: repeating-conic-gradient(#666 0 25%, #8e8e8e 0 50%) 0 0 / 2px 2px;
    padding: 17px 9px;
}
.frame {
    height: 112px;
    background: repeating-conic-gradient(#999 0 25%, #c8c8c8 0 50%) 0 0 / 10.8px 10.8px;
    padding: 10px 20px;
}
.safe {
    border: 1px solid #79354c;
    height: 91px;
}
.zone {
    margin-left: 10px;
    height: 17px;
    margin-top: 25px;
    display: flex;
    align-items: center;
    white-space: nowrap;
}
.zone .pick {
    width: 109px;
    margin-left: 14px;
    font-family: "DejaVu Sans Condensed", sans-serif;
    font-size: 8.8px;
}
.gen-foot {
    padding: 4px 0 0 2px;
}
.gen-foot button {
    width: 50px;
    height: 16px;
    padding: 0;
    border: 1px solid #777;
    border-radius: 2px;
    background: #8d8b8c;
    font: 9.2px/12px "Liberation Sans", sans-serif;
}

/* user account control */
.uac {
    position: absolute;
    left: 440px;
    top: 217px;
    width: 387px;
    height: 217px;
    background: #12ff35;
    padding: 0 6px;
    font-family: "Open Sans", sans-serif;
    font-stretch: normal;
}
.uac-title {
    height: 25px;
    display: flex;
    align-items: center;
    padding-left: 2px;
}
.uac-title span {
    flex: 1;
    text-align: center;
    font-size: 12.2px;
    color: #175c1b;
    padding-left: 12px;
    white-space: nowrap;
}
.uac-title b {
    width: 27px;
    height: 18px;
    align-self: flex-start;
    background: #c74a50;
    color: #fff;
    text-align: center;
    font-size: 9px;
    line-height: 18px;
    margin-right: -1px;
}
.uac-body {
    height: 186px;
    background: #efefef;
}
.question {
    height: 45px;
    background: linear-gradient(90deg, #103a77, #126591 45%, #1e808d);
    color: #e9f3f6;
    display: flex;
    font-size: 12.5px;
    line-height: 18.5px;
}
.question p {
    margin: 6px 0 0;
    white-space: nowrap;
}
.badge {
    width: 42px;
    padding: 10px 0 0 10px;
    position: relative;
}
.badge svg {
    width: 22px;
    height: 25px;
}
.badge b {
    position: absolute;
    left: 17px;
    top: 13px;
    font-size: 15px;
    color: #fff;
}
.program {
    height: 74px;
    background: #fff;
    display: flex;
    padding: 16px 0 0 43px;
    font-size: 9.8px;
}
.program dl {
    margin: 0 0 0 15px;
    display: grid;
    grid-template-columns: 84px auto;
    grid-auto-rows: 14.7px;
    line-height: 15px;
    white-space: nowrap;
    align-content: start;
}
.program dt, .program dd {
    margin: 0;
    letter-spacing: -.1px;
}
.program dd b {
    letter-spacing: -.25px;
}
.choices {
    height: 32px;
    border-top: 1px solid #ddd;
    border-bottom: 1px solid #ddd;
    display: flex;
    align-items: center;
    padding: 0 8px 0 6px;
    font-size: 9.8px;
}
.choices span {
    margin: 0 auto 0 3px;
    padding-top: 2px;
}
.choices button {
    width: 61px;
    height: 20px;
    padding: 0;
    margin-left: 6px;
    border: 1px solid #aaa;
    background: linear-gradient(#f1f1f1, #e4e4e7);
    font: 10.3px/16px "Open Sans", sans-serif;
}
.choices .focus {
    border-color: #4a91c7;
}
.change {
    padding: 11px 7px 0 0;
    text-align: right;
    font-size: 9.5px;
}
.change a {
    color: #2b66aa;
}
.pointer {
    position: absolute;
    left: 779px;
    top: 385px;
}
```
